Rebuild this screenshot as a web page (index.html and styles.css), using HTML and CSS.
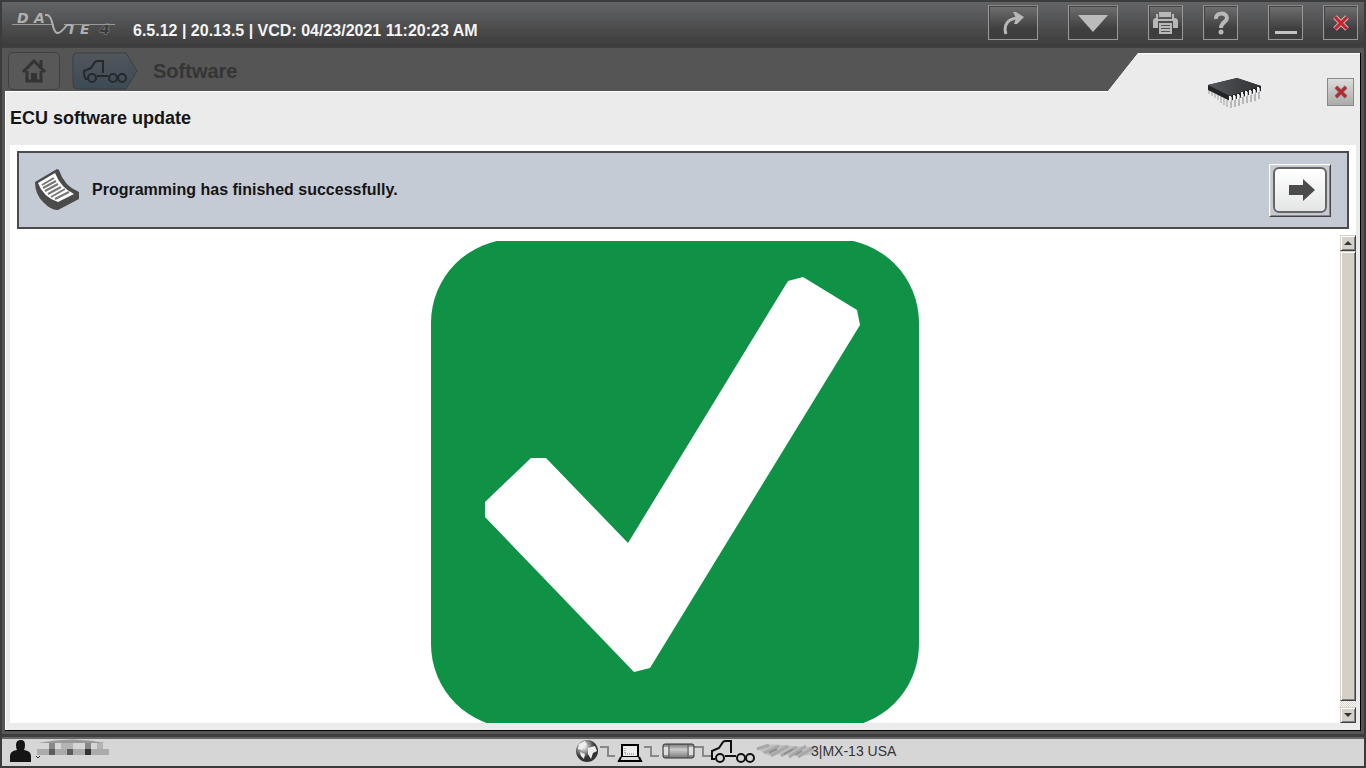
FILE: index.html
```html
<!DOCTYPE html>
<html lang="en">
<head>
    <meta charset="UTF-8">
    <title>DAVIE4 - ECU software update</title>
    <link rel="stylesheet" href="styles.css">
</head>
<body>

<header class="titlebar">
    <svg class="logo" width="106" height="34" viewBox="0 -7 106 34" role="img" aria-label="DAVIE4">
        <g class="logo-text">
            <text x="5" y="11">D</text><text x="22" y="11">A</text>
            <text x="57" y="22">I</text><text x="68" y="22">E</text><text class="logo-dark" x="88" y="22">4</text>
        </g>
        <path d="M0 12.500H42M52 12.500H103" stroke="#999" fill="none"/>
        <path d="M33 3H35Q38 3 40 10Q42 20 45 21Q48 22 55 13H60" stroke="#b0b0b0" stroke-width="2" fill="none"/>
    </svg>
    <span class="version">6.5.12 | 20.13.5 | VCD: 04/23/2021 11:20:23 AM</span>
    <div class="tools">
        <button class="tool wide" aria-label="Forward">
            <svg width="24" height="26" viewBox="0 0 24 26"><path d="M5 24C2 15 7 8 18 8" stroke="#b8b8b8" stroke-width="3" fill="none"/><path d="M12 2L15 2L23 7L16 14L13 14L15 8Z" fill="#b8b8b8"/></svg>
        </button>
        <button class="tool wide" aria-label="Menu">
            <svg width="30" height="18" viewBox="0 0 30 18"><path d="M0 1H30L15 18Z" fill="#bbb"/></svg>
        </button>
        <div class="pair">
            <button class="tool" aria-label="Print">
                <svg width="26" height="24" viewBox="0 0 26 24"><path d="M6 1H18V6H6Z" fill="#b8b8b8"/><path d="M3 3H5V8H19V3H21V7Q25 7 25 10V17H20V10H5V17H0V10Q0 7 3 7Z" fill="#b8b8b8"/><path d="M6 12H19V23H6Z" fill="#b8b8b8"/><path d="M8 14.500H17M8 17.500H17M8 20.500H17" stroke="#555"/></svg>
            </button>
            <button class="tool" aria-label="Help">
                <svg width="18" height="24" viewBox="0 0 18 24"><path d="M4 8C3 1 15 1 15 7C15 11 9 11 9 17" stroke="#b8b8b8" stroke-width="4" fill="none"/><circle cx="9" cy="21" r="2.500" fill="#b8b8b8"/></svg>
            </button>
        </div>
        <div class="pair">
            <button class="tool" aria-label="Minimize">
                <svg width="24" height="24" viewBox="0 0 24 24"><path d="M1 20H23V23H1Z" fill="#c4c4c4"/></svg>
            </button>
            <button class="tool" aria-label="Close">
                <svg width="18" height="18" viewBox="0 0 18 18"><path d="M3 3L15 15M15 3L3 15" stroke="#c4b8b8" stroke-width="5"/><path d="M3 3L15 15M15 3L3 15" stroke="#c8202c" stroke-width="3"/></svg>
            </button>
        </div>
    </div>
</header>

<main class="workspace">
    <nav class="breadcrumb">
        <button class="crumb-home" aria-label="Home">
            <svg width="26" height="24" viewBox="0 0 26 24"><path d="M2 13L13 2L24 13M20 8V1" stroke="#333" stroke-width="3" fill="none"/><path d="M6 12V22H20V12" stroke="#333" stroke-width="3" fill="none"/><path d="M10 14H16V23H10Z" fill="#333"/></svg>
        </button>
        <button class="crumb-truck" aria-label="Vehicle">
            <svg width="66" height="38" viewBox="0 0 66 38"><path d="M5 1H54L65 19L54 37H5Q1 37 1 33V5Q1 1 5 1Z" fill="url(#crumb)" stroke="#3a3f43"/>
                <defs><linearGradient id="crumb" x2="0" y2="1"><stop offset="0" stop-color="#51575c"/><stop offset="1" stop-color="#3d4a54"/></linearGradient></defs>
                <g transform="translate(11 7)" fill="none" stroke="#26292c" stroke-width="2"><path d="M5 20H3Q1 19 1 12L8 9L12 3Q13 2 15 2H20V14M14 17H25"/><circle cx="9" cy="19" r="4"/><circle cx="30" cy="19" r="4"/><circle cx="39" cy="19" r="4"/></g>
            </svg>
        </button>
        <span class="crumb-label">Software</span>
    </nav>

    <section class="dialog">
        <div class="dialog-inner">
            <header class="dialog-head">
                <h1>ECU software update</h1>
                <svg class="chip" width="54" height="32" viewBox="0 0 54 32">
                    <path d="M1 9V16M4 12V18M7 14V20M10 16V22M13 18V25M16 20V27M19 22V29" stroke="#c4c4c4" stroke-width="2"/>
                    <path d="M0 7L29 0L53 8V13L22 23L0 12Z" fill="#222427"/>
                    <path d="M0 7L29 0L53 8L22 18Z" fill="url(#chipTop)"/>
                    <path d="M23 19V30M27 18V29M31 17V28M35 16V26M39 14V25M43 13V24M47 12V23M51 10V21" stroke="#b8b8b8" stroke-width="2"/>
                    <path d="M22 18V23M26 17V22M30 16V21M34 14V19M38 13V18M42 12V17M46 11V16M50 9V14" stroke="#f4f4f4" stroke-width="2"/>
                    <defs><linearGradient id="chipTop"><stop offset="0" stop-color="#54575b"/><stop offset="1" stop-color="#303235"/></linearGradient></defs>
                </svg>
                <button class="dialog-close" aria-label="Close update">
                    <svg width="14" height="14" viewBox="0 0 14 14"><path d="M2 2L12 12M12 2L2 12" stroke="#777" stroke-width="4"/><path d="M2 2L12 12M12 2L2 12" stroke="#c0252e" stroke-width="2.500"/></svg>
                </button>
            </header>

            <div class="content">
                <div class="banner">
                    <svg width="46" height="44" viewBox="0 0 46 44">
                        <path d="M1 14L23 1L25 2Q30 18 45 24V31L24 42Q18 43 9 34Q1 26 1 14Z" fill="#4b4b4b"/>
                        <path d="M4 15L21 5Q27 20 40 26L24 34Q9 29 4 15Z" fill="#fff"/>
                        <path d="M8 17L20 10M9 20L22 13M11 23L24 16M14 26L27 19M17 29L31 21M21 31L35 24" stroke="#777" stroke-width="2"/>
                    </svg>
                    <p>Programming has finished successfully.</p>
                    <button class="next" aria-label="Next">
                        <span><svg width="26" height="22" viewBox="0 0 26 22"><path d="M0 6H14V0L26 11L14 22V16H0Z" fill="#4b4b4b"/></svg></span>
                    </button>
                </div>

                <div class="viewer">
                    <div class="picture">
                        <svg width="488" height="488" viewBox="431 241 488 488" role="img" aria-label="Success">
                            <rect x="431" y="239" width="488" height="489" rx="84" fill="#0f9246"/>
                            <path d="M485 502L531 458H546L628 543L788 281L803 277L857 310L860 325L650 668L634 672L485 517Z" fill="#fff"/>
                        </svg>
                    </div>
                    <div class="scrollbar">
                        <button aria-label="Scroll up"><svg width="8" height="4" viewBox="0 0 8 4"><path d="M0 4L4 0L8 4Z" fill="#333"/></svg></button>
                        <div class="thumb"></div>
                        <button aria-label="Scroll down"><svg width="8" height="4" viewBox="0 0 8 4"><path d="M0 0H8L4 4Z" fill="#333"/></svg></button>
                    </div>
                </div>
            </div>
        </div>
    </section>
</main>

<footer class="statusbar">
    <div class="user">
        <svg width="22" height="23" viewBox="0 0 22 23"><path d="M6 6Q6 1 11 1Q15 1 15 6Q15 9 14 11Q21 12 21 17V23H0V17Q0 12 7 11Q6 9 6 6Z" fill="#151515"/></svg>
        <svg width="77" height="20" viewBox="0 0 77 20">
            <path d="M6 4Q40 -3 74 4Z" fill="#999"/>
            <path d="M17 4H23V10H17ZM53 4H59V10H53Z" fill="#888"/><path d="M29 4H41V10H29ZM65 4H71V10H65Z" fill="#b4b4b4"/>
            <path d="M5 10H77V16H5Z" fill="#ababab"/><path d="M17 10H23V16H17ZM35 10H41V16H35Z" fill="#5c5c5c"/><path d="M53 10H59V16H53Z" fill="#333"/>
            <path d="M4 17L6 19L8 17" stroke="#333" fill="none"/>
        </svg>
    </div>
    <div class="connection">
        <svg width="180" height="26" viewBox="0 0 180 26">
            <defs>
                <radialGradient id="globe" cx=".35" cy=".3"><stop offset="0" stop-color="#fff"/><stop offset=".5" stop-color="#999"/><stop offset="1" stop-color="#333"/></radialGradient>
                <linearGradient id="metal" x2="0" y2="1"><stop offset="0" stop-color="#777"/><stop offset=".4" stop-color="#ccc"/><stop offset="1" stop-color="#777"/></linearGradient>
            </defs>
            <circle cx="12" cy="12" r="11" fill="url(#globe)"/>
            <path d="M4 5L10 2L12 6L8 8L7 11L3 10ZM13 9L20 7L22 12L18 14L16 20L13 15ZM5 13L10 15L9 20L6 17Z" fill="#eee"/>
            <path d="M25 8H33V17H40M69 8H76V17H84M119 8H128V17H136" stroke="#888" stroke-width="2" fill="none"/>
            <path d="M47 6H63V18H47Z" fill="#eee" stroke="#000" stroke-width="2"/><path d="M50 9V15H60" fill="none" stroke="#777" stroke-dasharray="1 1"/>
            <path d="M46 18L44 22H66L64 18" fill="#ddd" stroke="#000" stroke-width="2"/>
            <rect x="88" y="5" width="31" height="14" rx="2" fill="url(#metal)" stroke="#333"/>
            <path d="M89 8H93V16H89ZM114 8H118V16H114Z" fill="#ddd"/>
            <path d="M94 5V19M113 5V19" stroke="#555"/>
            <g fill="none" stroke="#111" stroke-width="2"><path d="M140 20H137V12L144 9L148 3Q149 2 151 2H156V14M150 17H161"/><circle cx="145" cy="19" r="4"/><circle cx="166" cy="19" r="4"/><circle cx="175" cy="19" r="4"/></g>
        </svg>
        <svg class="smudge" width="60" height="16" viewBox="0 0 60 16">
            <path d="M1 5Q12 0 28 2T60 4L58 11Q48 14 34 12T14 13Z" fill="#bebebe"/>
            <path d="M2 6L14 2M9 10L24 3M16 13L33 3M26 13L42 4M34 14L51 3M43 14L59 4" stroke="#a8a8a8" stroke-width="3"/>
            <path d="M14 10L22 6M29 11L38 6M40 12L47 8" stroke="#8f8f8f" stroke-width="2"/>
        </svg>
        <span>3|MX-13 USA</span>
    </div>
</footer>

</body>
</html>
```

FILE: styles.css
```css
* {
    box-sizing: border-box;
}
body {
    margin: 0;
    padding: 2px;
    height: 100vh;
    display: flex;
    flex-direction: column;
    background: #3c3c3c;
    font-family: "Liberation Sans", Arial, sans-serif;
    color: #151515;
    overflow: hidden;
}
button {
    padding: 0;
    border: none;
    background: none;
    display: flex;
    align-items: center;
    justify-content: center;
    cursor: pointer;
}
svg {
    display: block;
    flex-shrink: 0;
}

/* title bar */
.titlebar {
    height: 46px;
    padding: 3px 6px 0 10px;
    display: flex;
    align-items: flex-start;
    background: linear-gradient(#636466, #3c3c3c);
    border-bottom: 2px solid #404040;
}
.logo {
    overflow: visible;
}
.logo-text {
    font-family: "DejaVu Sans", sans-serif;
    font-size: 14px;
    font-weight: bold;
    font-style: italic;
    fill: #b0b0b0;
}
.logo-dark {
    fill: #3a3a3a;
    stroke: #888;
    stroke-width: 1px;
    paint-order: stroke;
}
.version {
    margin: 16px 0 0 15px;
    font-size: 16px;
    line-height: 20px;
    font-weight: bold;
    color: #f4f4f4;
}
.tools {
    margin-left: auto;
    display: flex;
    gap: 30px;
}
.pair {
    display: flex;
    gap: 20px;
}
.tool {
    width: 35px;
    height: 35px;
    border: 1px solid #999;
    border-top-color: #888;
    background: linear-gradient(#707070, #3e3e3e 70%);
    box-shadow: inset 1px 1px #444;
}
.tool.wide {
    width: 50px;
}

/* workspace */
.workspace {
    flex: 1;
    min-height: 0;
    padding: 0 3px 3px;
    display: flex;
    flex-direction: column;
    background: #555;
}
.breadcrumb {
    height: 43px;
    padding: 4px 3px 0;
    display: flex;
    align-items: flex-start;
    gap: 12px;
}
.crumb-home {
    width: 52px;
    height: 38px;
    border: 1px solid #404040;
    border-radius: 5px;
    background: #585858;
}
.crumb-label {
    margin-left: 3px;
    font-size: 20px;
    line-height: 38px;
    font-weight: bold;
    color: #353535;
}

/* dialog with the raised tab on its right side */
.dialog,
.dialog-inner {
    clip-path: polygon(0 38px, calc(100% - 253px) 38px, calc(100% - 223px) 0, 100% 0, 100% 100%, 0 100%);
}
.dialog {
    flex: 1;
    min-height: 0;
    margin-top: -38px;
    padding: 1px 0 0 1px;
    display: flex;
    background: #fff;
    border-right: 1px solid #000;
    border-bottom: 1px solid #000;
}
.dialog-inner {
    flex: 1;
    min-width: 0;
    padding: 0 4px 7px;
    display: flex;
    flex-direction: column;
    background: #ebebeb;
}
.dialog-head {
    height: 91px;
    padding: 24px 2px 0 0;
    display: flex;
    align-items: flex-start;
}
.dialog-head h1 {
    margin: 29px auto 0 0;
    font-size: 18px;
    line-height: 22px;
}
.dialog-close {
    width: 27px;
    height: 28px;
    margin-left: 65px;
    border: 1px solid #888;
    background: linear-gradient(#ddd, #aaa);
}

.content {
    flex: 1;
    min-height: 0;
    padding-top: 6px;
    display: flex;
    flex-direction: column;
    gap: 6px;
    background: #fff;
}
.banner {
    height: 78px;
    margin: 0 7px;
    padding: 0 16px 0 15px;
    display: flex;
    align-items: center;
    gap: 12px;
    border: 2px solid #4b4b4b;
    background: #c5cbd5;
}
.banner p {
    margin: 0;
    flex: 1;
    font-size: 16px;
    line-height: 20px;
    font-weight: bold;
}
.next {
    width: 62px;
    height: 53px;
    border: 1px solid;
    border-color: #fff #444 #444 #fff;
    box-shadow: inset 1px 1px #d4d0c8, inset -1px -1px #888;
}
.next span {
    width: 54px;
    height: 46px;
    padding-left: 4px;
    display: flex;
    align-items: center;
    justify-content: center;
    border: 2px solid #666;
    border-radius: 6px;
    background: linear-gradient(#fff, #e4e6e6);
}

.viewer {
    flex: 1;
    min-height: 0;
    display: flex;
}
.picture {
    flex: 1;
    padding-top: 6px;
    display: flex;
    justify-content: center;
    align-items: flex-start;
    overflow: hidden;
}
.scrollbar {
    width: 16px;
    display: flex;
    flex-direction: column;
    background: repeating-conic-gradient(#d4d0c8 0 25%, #fff 0 50%) 0 0 / 2px 2px;
}
.scrollbar button,
.thumb {
    height: 16px;
    border: 1px solid;
    border-color: #d4d0c8 #404040 #404040 #d4d0c8;
    background: #d4d0c8;
    box-shadow: inset 1px 1px #fff, inset -1px -1px #808080;
}
.scrollbar .thumb {
    flex: 1;
    margin-bottom: 6px;
}

/* status bar */
.statusbar {
    height: 32px;
    display: flex;
    align-items: flex-start;
    background: #d6d6d6;
    border-top: 3px solid #3c3c3c;
    box-shadow: inset 0 2px #666;
}
.user {
    flex: 0 0 42%;
    padding: 2px 8px;
    display: flex;
}
.connection {
    padding: 2px 0 0 1px;
    display: flex;
    align-items: flex-start;
    font-size: 14px;
    line-height: 24px;
    color: #333;
}
.smudge {
    margin: 4px -4px 0 0;
}
```
